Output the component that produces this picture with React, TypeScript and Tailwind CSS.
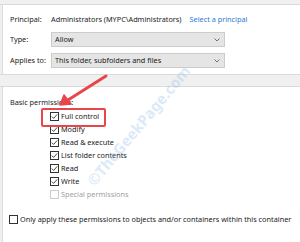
import { ReactNode } from "react";

function Check({ checked, disabled }: { checked?: boolean; disabled?: boolean }) {
  return (
    <svg width="9" height="9" viewBox="0 0 9 9" className="shrink-0">
      <rect
        x="0.5"
        y="0.5"
        width="8"
        height="8"
        fill="white"
        stroke={disabled ? "#cccccc" : "#333333"}
      />
      {checked && (
        <path d="M1.8 4.6 L3.6 6.4 L7.2 2.4" fill="none" stroke="#333333" strokeWidth="0.9" />
      )}
    </svg>
  );
}

function Select({ value }: { value: string }) {
  return (
    <div className="flex items-center justify-between w-[174px] h-[15px] bg-[#e5e5e5] border border-[#cccccc] pl-[3px] pr-[4px]">
      <span>{value}</span>
      <svg width="6" height="4" viewBox="0 0 6 4">
        <path d="M0.5 0.5 L3 3 L5.5 0.5" fill="none" stroke="#555" strokeWidth="0.8" />
      </svg>
    </div>
  );
}

function Row({ label, children }: { label: string; children: ReactNode }) {
  return (
    <div className="flex items-center h-[15px]">
      <span className="w-[41px]">{label}</span>
      {children}
    </div>
  );
}

const perms = [
  { label: "Full control", checked: true },
  { label: "Modify", checked: true },
  { label: "Read & execute", checked: true },
  { label: "List folder contents", checked: true },
  { label: "Read", checked: true },
  { label: "Write", checked: true },
  { label: "Special permissions", checked: false, disabled: true },
];

export default function App() {
  return (
    <div
      className="relative w-[300px] h-[242px] overflow-hidden bg-[#f0f0f0] text-[7.3px] text-[#1a1a1a]"
      style={{ fontFamily: '"Noto Sans", "Open Sans", sans-serif' }}
    >
      <div className="h-[5px] border-b border-[#dadada]" />

      <div className="ml-[2px] bg-white border-l border-[#dadada] pl-[7px] pt-[7px] pb-[6px] h-[69px] flex flex-col gap-[6px]">
        <Row label="Principal:">
          <span>Administrators (MYPC\Administrators)</span>
          <span className="ml-[8px] text-[#2b7bd6]">Select a principal</span>
        </Row>
        <Row label="Type:">
          <Select value="Allow" />
        </Row>
        <Row label="Applies to:">
          <Select value="This folder, subfolders and files" />
        </Row>
      </div>

      <div className="h-[13px] border-t border-b border-[#dadada]" />

      <div className="ml-[2px] bg-white border-l border-[#dadada] pl-[6px] pt-[10px] h-[160px]">
        <div className="h-[10px] flex items-center pl-[1px]">Basic permissions:</div>
        <div className="mt-[3px] pl-[41px] flex flex-col">
          {perms.map((p) => (
            <label
              key={p.label}
              className={`flex items-center gap-[2px] h-[13px] ${p.disabled ? "text-[#a0a0a0]" : ""}`}
            >
              <Check checked={p.checked} disabled={p.disabled} />
              {p.label}
            </label>
          ))}
        </div>
        <label className="mt-[12px] flex items-center gap-[2px] h-[13px]">
          <Check />
          Only apply these permissions to objects and/or containers within this container
        </label>
      </div>

      {/* callout */}
      <div className="absolute left-[41px] top-[108px] w-[65px] h-[19px] border-2 border-[#e8464a] rounded-[2px]" />
      <svg className="absolute left-0 top-0" width="300" height="242" viewBox="0 0 300 242">
        <line x1="106" y1="76" x2="68" y2="100" stroke="#e8464a" strokeWidth="3" strokeLinecap="round" />
        <path d="M60 105 L64 95 L71 104 Z" fill="#e8464a" stroke="#e8464a" strokeWidth="1.5" strokeLinejoin="round" />
      </svg>

      {/* watermark */}
      <div
        className="absolute left-[90px] top-[172px] text-[15px] font-bold text-[#9ec3ec] opacity-35 whitespace-nowrap"
        style={{ transform: "rotate(-50deg)", transformOrigin: "left center" }}
      >
        ©TheGeekPage.com
      </div>
    </div>
  );
}
